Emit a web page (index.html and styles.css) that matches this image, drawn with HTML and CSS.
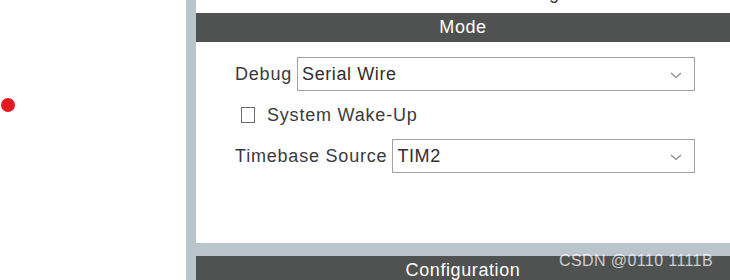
FILE: index.html
```html
<!DOCTYPE html>
<html lang="en">
<head>
  <meta charset="UTF-8">
  <title>SYS Mode and Configuration</title>
  <link rel="stylesheet" href="styles.css">
</head>
<body>
  <div class="layout">
    <div class="pinout">
      <span class="pin-dot"></span>
    </div>

    <div class="panel">
      <div class="panel-title"><span>SYS Mode and Configuration</span></div>
      <div class="section-bar">Mode</div>

      <div class="mode-body">
        <div class="row">
          <label class="field-label">Debug</label>
          <div class="combo">
            <span>Serial Wire</span>
            <svg class="chevron" width="12" height="7" viewBox="0 0 12 7"><path d="M1 1 L6 5.5 L11 1" fill="none" stroke="#8c8c8c" stroke-width="1.3"/></svg>
          </div>
        </div>

        <div class="row check-row">
          <span class="checkbox"></span>
          <span class="check-label">System Wake-Up</span>
        </div>

        <div class="row">
          <label class="field-label">Timebase Source</label>
          <div class="combo">
            <span>TIM2</span>
            <svg class="chevron" width="12" height="7" viewBox="0 0 12 7"><path d="M1 1 L6 5.5 L11 1" fill="none" stroke="#8c8c8c" stroke-width="1.3"/></svg>
          </div>
        </div>
      </div>

      <div class="section-bar config-bar">Configuration</div>
    </div>
  </div>

  <div class="watermark">CSDN @0110 1111B</div>
</body>
</html>
```

FILE: styles.css
```css
html, body { margin: 0; padding: 0; height: 280px; overflow: hidden; background: #fff; }
body { font-family: "Liberation Sans", Arial, sans-serif; color: #3a3a3c; position: relative; }

.layout { display: flex; height: 280px; }

.pinout { width: 186px; flex-shrink: 0; position: relative; background: #fff; }
.pin-dot {
  position: absolute; left: 1px; top: 98px;
  width: 14px; height: 14px; border-radius: 50%; background: #e61b22;
}

.panel { flex: 1; background: #b9c4cb; padding-left: 10px; display: flex; flex-direction: column; overflow: hidden; }
.panel > div { flex-shrink: 0; }

.panel-title {
  height: 13px; background: #fff; overflow: hidden; position: relative;
}
.panel-title span {
  position: absolute; left: 60px; right: 0; top: -17px;
  text-align: center; font-size: 18px; letter-spacing: 0.9px; line-height: 20px; color: #3a3a3c;
}

.section-bar {
  height: 29px; line-height: 29px; background: #505251; color: #fff;
  text-align: center; font-size: 18px; letter-spacing: 0.6px;
}

.mode-body {
  height: 201px; background: #fff; box-sizing: border-box;
  padding: 15px 35px 0 39px; display: flex; flex-direction: column; gap: 12px;
}

.row { display: flex; align-items: center; font-size: 18px; letter-spacing: 0.8px; }
.field-label { margin-right: 5px; white-space: nowrap; }

.combo {
  flex: 1; height: 34px; box-sizing: border-box; border: 1px solid #a3a3a3;
  display: flex; align-items: center; justify-content: space-between;
  padding: 0 12px 0 4px; color: #2e2e30; letter-spacing: 0.6px;
}
.chevron { display: block; margin-top: 2px; }

.check-row { height: 24px; padding-left: 6px; }
.checkbox {
  width: 12px; height: 14px; border: 1px solid #6c6c6c; background: #fff; margin-right: 12px;
}

.config-bar { margin-top: 13px; }

.watermark {
  position: absolute; left: 559px; top: 252px;
  font-size: 16px; letter-spacing: 0.4px; color: rgba(255, 255, 255, 0.72);
}
```
